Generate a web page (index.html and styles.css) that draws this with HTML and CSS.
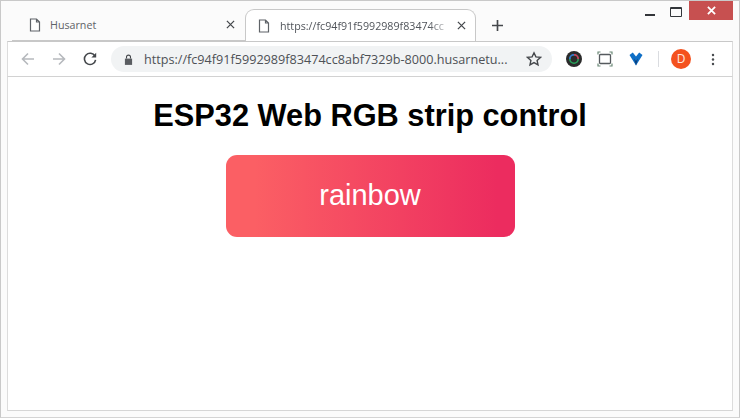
FILE: index.html
```html
<!DOCTYPE html>
<html>

<head>
	<meta charset="UTF-8">
	<title>ESP32 Web RGB strip control</title>
	<link rel="stylesheet" href="styles.css">
</head>

<body>
	<div class="window">
		<!--tab strip-->
		<div class="tabstrip">
			<div class="tab">
				<svg class="pageicon" viewBox="0 0 12 14"><path d="M1.5 1h6l3 3v9h-9zM7.5 1v3h3"/></svg>
				<span class="tabtitle">Husarnet</span>
				<svg class="tabclose" viewBox="0 0 10 10"><path d="M1 1l8 8M9 1l-8 8"/></svg>
			</div>
			<div class="tab active">
				<svg class="pageicon" viewBox="0 0 12 14"><path d="M1.5 1h6l3 3v9h-9zM7.5 1v3h3"/></svg>
				<span class="tabtitle">https://fc94f91f5992989f83474cc</span>
				<svg class="tabclose" viewBox="0 0 10 10"><path d="M1 1l8 8M9 1l-8 8"/></svg>
			</div>
			<svg class="newtab" viewBox="0 0 12 12"><path d="M6 0v12M0 6h12"/></svg>
			<div class="winbtns">
				<svg class="winmin" viewBox="0 0 10 2"><path d="M0 1h10"/></svg>
				<svg class="winmax" viewBox="0 0 12 10"><path d="M.5 .5h11v9H.5zM0 1.5h12"/></svg>
				<div class="winclose">
					<svg viewBox="0 0 10 10"><path d="M1 1l8 8M9 1l-8 8"/></svg>
				</div>
			</div>
		</div>
		<!--toolbar-->
		<div class="toolbar">
			<svg class="navicon dim" viewBox="0 0 14 14"><path d="M13 7H1.5M7 1.5L1.5 7 7 12.5"/></svg>
			<svg class="navicon dim" viewBox="0 0 14 14"><path d="M1 7h11.5M7 1.5L12.5 7 7 12.5"/></svg>
			<svg class="navicon" viewBox="0 0 14 14"><path d="M12 4.2A5.6 5.6 0 1 0 12.6 7.8"/><path class="fill" d="M13.2 .8v4.8H8.4z"/></svg>
			<div class="omnibox">
				<svg class="lock" viewBox="0 0 10 12"><path class="fill" d="M1 5h8v7H1z"/><path d="M2.8 5V3.3a2.2 2.2 0 0 1 4.4 0V5"/></svg>
				<span class="url">https://fc94f91f5992989f83474cc8abf7329b-8000.husarnetu...</span>
				<svg class="star" viewBox="0 0 16 16"><path d="M8 1.8l1.9 4.1 4.5.5-3.3 3 .9 4.4L8 11.6l-4 2.2.9-4.4-3.3-3 4.5-.5z"/></svg>
			</div>
			<div class="extensions">
				<svg class="ext" viewBox="0 0 16 16">
					<circle cx="8" cy="8" r="8" fill="#2b2b2b"/>
					<circle cx="8" cy="8" r="4.2" fill="none" stroke="#27a35a" stroke-width="1.6"/>
					<path d="M8 3.8A4.2 4.2 0 0 1 12.2 8" fill="none" stroke="#d8345f" stroke-width="1.6"/>
					<path d="M3.8 8A4.2 4.2 0 0 1 8 3.8" fill="none" stroke="#3a6fd8" stroke-width="1.6"/>
				</svg>
				<svg class="ext" viewBox="0 0 16 16">
					<path d="M1 3.5V1h2.5M12.5 1H15v2.5M15 12.5V15h-2.5M3.5 15H1v-2.5" fill="none" stroke="#6d8a78" stroke-width="1.2"/>
					<rect x="2.5" y="3.5" width="11" height="9" rx="1" fill="none" stroke="#555a5e" stroke-width="1.3"/>
				</svg>
				<svg class="ext" viewBox="0 0 16 16">
					<path d="M1.5 4L4.8 1.5 8 5.5 11.2 1.5 14.5 4 8 14.5z" fill="#0f6fc6"/>
					<path d="M6 7.5L8 10 10 7.5 8 14.5z" fill="#0b3f7c"/>
				</svg>
				<span class="sep"></span>
				<span class="avatar">D</span>
				<svg class="menu" viewBox="0 0 4 16"><circle cx="2" cy="2.5" r="1.5"/><circle cx="2" cy="8" r="1.5"/><circle cx="2" cy="13.5" r="1.5"/></svg>
			</div>
		</div>
		<!--page-->
		<div class="page">
			<h1>ESP32 Web RGB strip control</h1>
			<a class="button">rainbow</a>
		</div>
	</div>
</body>

</html>
```

FILE: styles.css
```css
/*CSS*/

html, body {
	padding: 0;
	margin: 0;
	overflow: hidden;
}

body {
	width: 740px;
	height: 418px;
	background-color: #fbfbfb;
}

.window {
	height: 418px;
	box-sizing: border-box;
	border: 1px solid #c9c9c9;
	border-bottom-color: #d4d4d4;
	padding: 0 6px 6px 5px;
	display: flex;
	flex-direction: column;
	font-family: "Open Sans", "Liberation Sans", sans-serif;
}

/*tab strip*/
.tabstrip {
	height: 40px;
	display: flex;
	align-items: flex-end;
	flex-shrink: 0;
	position: relative;
}

.tab {
	width: 231px;
	height: 32px;
	box-sizing: border-box;
	display: flex;
	align-items: center;
	padding: 0 9px 0 12px;
	font-size: 10.7px;
	color: #5f6368;
}

.tab:first-child {
	margin-left: 6px;
	width: 233px;
	border-bottom: 1px solid #c8c8c8;
	padding-left: 17px;
	padding-right: 10px;
}

.tab.active {
	background-color: #fff;
	border: 1px solid #c8c8c8;
	border-bottom: none;
	border-radius: 9px 9px 0 0;
	color: #50545a;
}

.pageicon {
	width: 12px;
	height: 14px;
	flex-shrink: 0;
	fill: #fff;
	stroke: #5f6368;
	stroke-width: 1.2;
}

.tabtitle {
	flex: 1;
	margin-left: 9px;
	white-space: nowrap;
	overflow: hidden;
	-webkit-mask-image: linear-gradient(to right, #000 88%, #0003);
	mask-image: linear-gradient(to right, #000 88%, #0003);
}

.tab.active .tabtitle {
	margin-left: 10px;
}

.tab:first-child .tabtitle {
	-webkit-mask-image: none;
	mask-image: none;
}

.tabclose {
	width: 9px;
	height: 9px;
	margin-left: 8px;
	flex-shrink: 0;
	fill: none;
	stroke: #44474b;
	stroke-width: 1.4;
}

.newtab {
	width: 11px;
	height: 11px;
	margin: 0 0 10px 16px;
	flex-shrink: 0;
	fill: none;
	stroke: #44474b;
	stroke-width: 1.8;
}

.winbtns {
	margin-left: auto;
	align-self: flex-start;
	display: flex;
	align-items: flex-start;
}

.winmin {
	width: 10px;
	height: 2px;
	margin: 13px 15px 0 0;
	fill: none;
	stroke: #33363a;
	stroke-width: 2;
}

.winmax {
	width: 12px;
	height: 10px;
	margin: 6px 7px 0 0;
	fill: none;
	stroke: #33363a;
	stroke-width: 1;
}

.winclose {
	width: 44px;
	height: 19px;
	background-color: #c75050;
	display: flex;
	align-items: center;
	justify-content: center;
}

.winclose svg {
	width: 9px;
	height: 9px;
	fill: none;
	stroke: #fff;
	stroke-width: 2;
}

/*toolbar*/
.toolbar {
	height: 36px;
	box-sizing: border-box;
	flex-shrink: 0;
	margin-left: 1px;
	background-color: #fff;
	border-top: 1px solid #c8c8c8;
	border-bottom: 1px solid #d2d2d2;
	border-left: 1px solid #dcdcdc;
	border-right: 1px solid #dcdcdc;
	display: flex;
	align-items: center;
	padding-left: 13px;
}

.navicon {
	width: 14px;
	height: 14px;
	margin-right: 17px;
	flex-shrink: 0;
	fill: none;
	stroke: #44474b;
	stroke-width: 1.6;
}

.navicon.dim {
	stroke: #b6b9bd;
}

.fill {
	fill: #44474b;
	stroke: none;
}

.omnibox {
	width: 441px;
	height: 26px;
	margin-left: -3px;
	flex-shrink: 0;
	box-sizing: border-box;
	border-radius: 13px;
	background-color: #f1f3f4;
	display: flex;
	align-items: center;
	padding: 0 10px 0 13px;
}

.lock {
	width: 9px;
	height: 11px;
	flex-shrink: 0;
	fill: none;
	stroke: #44474b;
	stroke-width: 1.2;
}

.lock .fill {
	fill: #5a5d61;
}

.url {
	flex: 1;
	margin-left: 11px;
	font-size: 12.63px;
	color: #4e5156;
	white-space: nowrap;
	overflow: hidden;
}

.star {
	width: 16px;
	height: 16px;
	flex-shrink: 0;
	fill: none;
	stroke: #44474b;
	stroke-width: 1.4;
}

.extensions {
	display: flex;
	align-items: center;
	margin-left: 14px;
}

.ext {
	width: 16px;
	height: 16px;
	margin-right: 15px;
	flex-shrink: 0;
}

.sep {
	width: 1px;
	height: 16px;
	margin: 0 12px 0 -1px;
	background-color: #dadce0;
}

.avatar {
	width: 20px;
	height: 20px;
	border-radius: 50%;
	background-color: #f4511e;
	color: #ffe9e0;
	font-size: 12px;
	line-height: 20px;
	text-align: center;
}

.menu {
	width: 4px;
	height: 13px;
	margin-left: 20px;
	fill: #4a4d51;
}

/*page*/
.page {
	flex: 1;
	margin-left: 1px;
	background-color: #fff;
	border-left: 1px solid #dcdcdc;
	border-right: 1px solid #dcdcdc;
	border-bottom: 1px solid #d6d6d6;
	display: flex;
	flex-direction: column;
	align-items: center;
	font-family: "Liberation Sans", Arial, sans-serif;
}

h1 {
	margin: 20px 0 21px;
	font-size: 30.75px;
	line-height: 37px;
	font-weight: bold;
	color: #000;
}

.button {
	width: 289px;
	height: 82px;
	border-radius: 11px;
	background-image: linear-gradient(to right, #fb5f64 10%, #ec2c5f 94%);
	color: #fff;
	font-size: 29px;
	line-height: 81px;
	text-align: center;
}
```
